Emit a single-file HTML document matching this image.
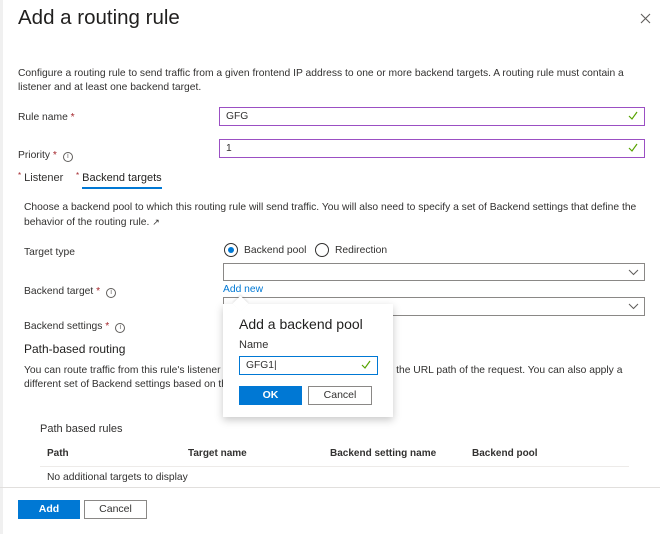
<!DOCTYPE html>
<html><head><style>
*{box-sizing:border-box;margin:0;padding:0}
body{width:660px;height:534px;background:#fff;font-family:"Liberation Sans",sans-serif;color:#323130;position:relative;overflow:hidden;font-size:10.3px}
.a{position:absolute;white-space:nowrap}
.req{color:#a4262c}
.inp{position:absolute;border:1px solid #8a8886;background:#fff}
.pur{border-color:#9b4fc3;border-width:1.5px}
.chk{position:absolute;right:6px;top:3px}
.info{display:inline-block;width:10px;height:10px;border:1px solid #605e5c;border-radius:50%;font-size:7px;text-align:center;line-height:8px;margin-left:6px;vertical-align:0px;color:#605e5c}
.btn{position:absolute;height:19px;font-size:10.5px;text-align:center;line-height:17px}
.blue{background:#0078d4;color:#fff;border:1px solid #0078d4;font-weight:bold}
.wh{background:#fff;border:1px solid #8a8886;color:#323130}
</style></head><body>
<div class="a" style="left:0;top:0;width:3px;height:534px;background:#f0f0f0"></div>
<div class="a" style="left:18px;top:6px;font-size:20.5px;color:#201f1e">Add a routing rule</div>
<svg class="a" style="left:640px;top:13px" width="11" height="11"><path d="M1 1L10 10M10 1L1 10" stroke="#605e5c" stroke-width="1.1"/></svg>
<div class="a" style="left:18px;top:67px;line-height:14px">Configure a routing rule to send traffic from a given frontend IP address to one or more backend targets. A routing rule must contain a<br>listener and at least one backend target.</div>
<div class="a" style="left:18px;top:112px">Rule name <span class="req">*</span></div>
<div class="inp pur" style="left:219px;top:107px;width:426px;height:19px"><span class="a" style="left:6px;top:3px">GFG</span><svg class="chk" width="10" height="9"><path d="M1 5L4 8L9 1" stroke="#57a300" fill="none" stroke-width="1.2"/></svg></div>
<div class="a" style="left:18px;top:150px">Priority <span class="req">*</span><span class="info">i</span></div>
<div class="inp pur" style="left:219px;top:139px;width:426px;height:19px"><span class="a" style="left:6px;top:3px">1</span><svg class="chk" width="10" height="9"><path d="M1 5L4 8L9 1" stroke="#57a300" fill="none" stroke-width="1.2"/></svg></div>
<div class="a" style="left:18px;top:171px;font-size:11px"><span class="req" style="font-size:8px;vertical-align:3px">*</span> Listener</div>
<div class="a" style="left:76px;top:171px;font-size:11px;color:#201f1e"><span class="req" style="font-size:8px;vertical-align:3px">*</span> Backend targets</div>
<div class="a" style="left:82px;top:187px;width:80px;height:2px;background:#0078d4"></div>
<div class="a" style="left:24px;top:201px;line-height:14px">Choose a backend pool to which this routing rule will send traffic. You will also need to specify a set of Backend settings that define the<br>behavior of the routing rule. <span style="font-size:9px">&#x2197;</span></div>
<div class="a" style="left:24px;top:247px">Target type</div>
<div class="a" style="left:224px;top:243px;width:14px;height:14px;border:1px solid #323130;border-radius:50%"><div style="position:absolute;left:3px;top:3px;width:6px;height:6px;border-radius:50%;background:#0078d4"></div></div>
<div class="a" style="left:244px;top:245px">Backend pool</div>
<div class="a" style="left:315px;top:243px;width:14px;height:14px;border:1px solid #323130;border-radius:50%"></div>
<div class="a" style="left:335px;top:245px">Redirection</div>
<div class="inp" style="left:223px;top:263px;width:422px;height:18px"><svg class="a" style="right:5px;top:5px" width="11" height="7"><path d="M1 1L5.5 5.5L10 1" stroke="#605e5c" fill="none"/></svg></div>
<div class="a" style="left:24px;top:286px">Backend target <span class="req">*</span><span class="info">i</span></div>
<div class="a" style="left:223px;top:284px;color:#0078d4">Add new</div>
<div class="inp" style="left:223px;top:297px;width:422px;height:19px"><svg class="a" style="right:5px;top:5px" width="11" height="7"><path d="M1 1L5.5 5.5L10 1" stroke="#605e5c" fill="none"/></svg></div>
<div class="a" style="left:24px;top:321px">Backend settings <span class="req">*</span><span class="info">i</span></div>
<div class="a" style="left:24px;top:342px;font-size:12px;color:#201f1e">Path-based routing</div>
<div class="a" style="left:24px;top:364px;line-height:14px">You can route traffic from this rule's listener to different backend targets based on the URL path of the request. You can also apply a<br>different set of Backend settings based on the URL path.</div>
<div class="a" style="left:40px;top:423px;font-size:11px">Path based rules</div>
<div class="a" style="left:47px;top:448px;font-weight:bold;font-size:10px">Path</div>
<div class="a" style="left:188px;top:448px;font-weight:bold;font-size:10px">Target name</div>
<div class="a" style="left:330px;top:448px;font-weight:bold;font-size:10px">Backend setting name</div>
<div class="a" style="left:472px;top:448px;font-weight:bold;font-size:10px">Backend pool</div>
<div class="a" style="left:40px;top:466px;width:589px;height:1px;background:#edebe9"></div>
<div class="a" style="left:47px;top:472px">No additional targets to display</div>
<div class="a" style="left:0;top:487px;width:660px;height:1px;background:#e1dfdd"></div>
<div class="btn blue" style="left:18px;top:500px;width:62px">Add</div>
<div class="btn wh" style="left:84px;top:500px;width:63px">Cancel</div>
<!-- popup -->
<div class="a" style="left:223px;top:304px;width:170px;height:113px;background:#fff;box-shadow:0 3px 8px rgba(0,0,0,.22)"></div>
<div class="a" style="left:235px;top:298px;width:11px;height:11px;background:#fff;transform:rotate(45deg);box-shadow:-1px -1px 2px rgba(0,0,0,.1)"></div>
<div class="a" style="left:239px;top:316px;font-size:14px;color:#201f1e">Add a backend pool</div>
<div class="a" style="left:239px;top:339px;font-size:11px">Name</div>
<div class="a" style="left:239px;top:356px;width:139px;height:19px;border:1.5px solid #0078d4;background:#fff"><span class="a" style="left:6px;top:3px">GFG1|</span><svg class="chk" width="10" height="9"><path d="M1 5L4 8L9 1" stroke="#57a300" fill="none" stroke-width="1.2"/></svg></div>
<div class="btn blue" style="left:239px;top:386px;width:63px">OK</div>
<div class="btn wh" style="left:308px;top:386px;width:64px">Cancel</div>
</body></html>
